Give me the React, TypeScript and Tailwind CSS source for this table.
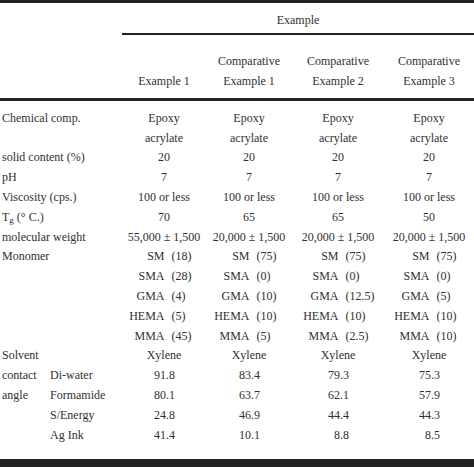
import React from "react";

const cols = ["w-[84px]", "w-[86px]", "w-[92px]", "w-[90px]"];

type Cell = string | React.ReactNode;

function Row({ label, cells }: { label: React.ReactNode; cells: Cell[] }) {
  return (
    <div className="flex h-[19.8px] items-center">
      <div className="w-[122px] pl-[2px] whitespace-nowrap">{label}</div>
      {cells.map((c, i) => (
        <div key={i} className={`${cols[i]} flex justify-center whitespace-nowrap`}>
          {c}
        </div>
      ))}
    </div>
  );
}

// monomer cell: name right-aligned, amount left-aligned
function Mono({ name, amt }: { name: string; amt: string }) {
  return (
    <div className="flex gap-[7px]">
      <span className="w-[38px] text-right">{name}</span>
      <span className="w-[30px] text-left">({amt})</span>
    </div>
  );
}

// numeric cell, right aligned in a small box
function Num({ v }: { v: string }) {
  return <span className="inline-block w-[22px] text-right">{v}</span>;
}

const monomers: [string, string[]][] = [
  ["SM", ["18", "75", "75", "75"]],
  ["SMA", ["28", "0", "0", "0"]],
  ["GMA", ["4", "10", "12.5", "5"]],
  ["HEMA", ["5", "10", "10", "10"]],
  ["MMA", ["45", "5", "2.5", "10"]],
];

const angles: [string, string, string[]][] = [
  ["contact", "Di-water", ["91.8", "83.4", "79.3", "75.3"]],
  ["angle", "Formamide", ["80.1", "63.7", "62.1", "57.9"]],
  ["", "S/Energy", ["24.8", "46.9", "44.4", "44.3"]],
  ["", "Ag Ink", ["41.4", "10.1", "8.8", "8.5"]],
];

export default function App() {
  return (
    <div className="w-[474px] h-[467px] bg-white text-[#303030] text-[12px] overflow-hidden font-['Liberation_Serif','Times_New_Roman',serif]">
      <div className="h-[3px] bg-[#222]" />

      {/* Header */}
      <div className="flex h-[30px] items-end pb-[4px]">
        <div className="w-[122px]" />
        <div className="flex-1 text-center">Example</div>
      </div>
      <div className="flex">
        <div className="w-[122px]" />
        <div className="flex-1 h-[2px] bg-[#222]" />
      </div>
      <div className="flex h-[63px] items-end pb-[7px]">
        <div className="w-[122px]" />
        {["Example 1", "Comparative\nExample 1", "Comparative\nExample 2", "Comparative\nExample 3"].map(
          (t, i) => (
            <div key={i} className={`${cols[i]} text-center whitespace-pre leading-[20px]`}>
              {t}
            </div>
          )
        )}
      </div>
      <div className="h-[3px] bg-[#222]" />

      {/* Body */}
      <div className="pt-[7px]">
        <Row label="Chemical comp." cells={["Epoxy", "Epoxy", "Epoxy", "Epoxy"]} />
        <Row label="" cells={["acrylate", "acrylate", "acrylate", "acrylate"]} />
        <Row label="solid content (%)" cells={["20", "20", "20", "20"]} />
        <Row label="pH" cells={["7", "7", "7", "7"]} />
        <Row label="Viscosity (cps.)" cells={["100 or less", "100 or less", "100 or less", "100 or less"]} />
        <Row
          label={
            <span>
              T<sub className="text-[9px]">g</sub> (° C.)
            </span>
          }
          cells={["70", "65", "65", "50"]}
        />
        <Row
          label="molecular weight"
          cells={["55,000 ± 1,500", "20,000 ± 1,500", "20,000 ± 1,500", "20,000 ± 1,500"]}
        />
        {monomers.map(([name, amts], r) => (
          <Row
            key={name}
            label={r === 0 ? "Monomer" : ""}
            cells={amts.map((a, i) => <Mono key={i} name={name} amt={a} />)}
          />
        ))}
        <Row label="Solvent" cells={["Xylene", "Xylene", "Xylene", "Xylene"]} />
        {angles.map(([a, b, vals]) => (
          <Row
            key={b}
            label={
              <div className="flex">
                <span className="w-[48px]">{a}</span>
                <span>{b}</span>
              </div>
            }
            cells={vals.map((v, i) => <Num key={i} v={v} />)}
          />
        ))}
      </div>

      <div className="mt-[14px] h-[8px] bg-[#222]" />
    </div>
  );
}
